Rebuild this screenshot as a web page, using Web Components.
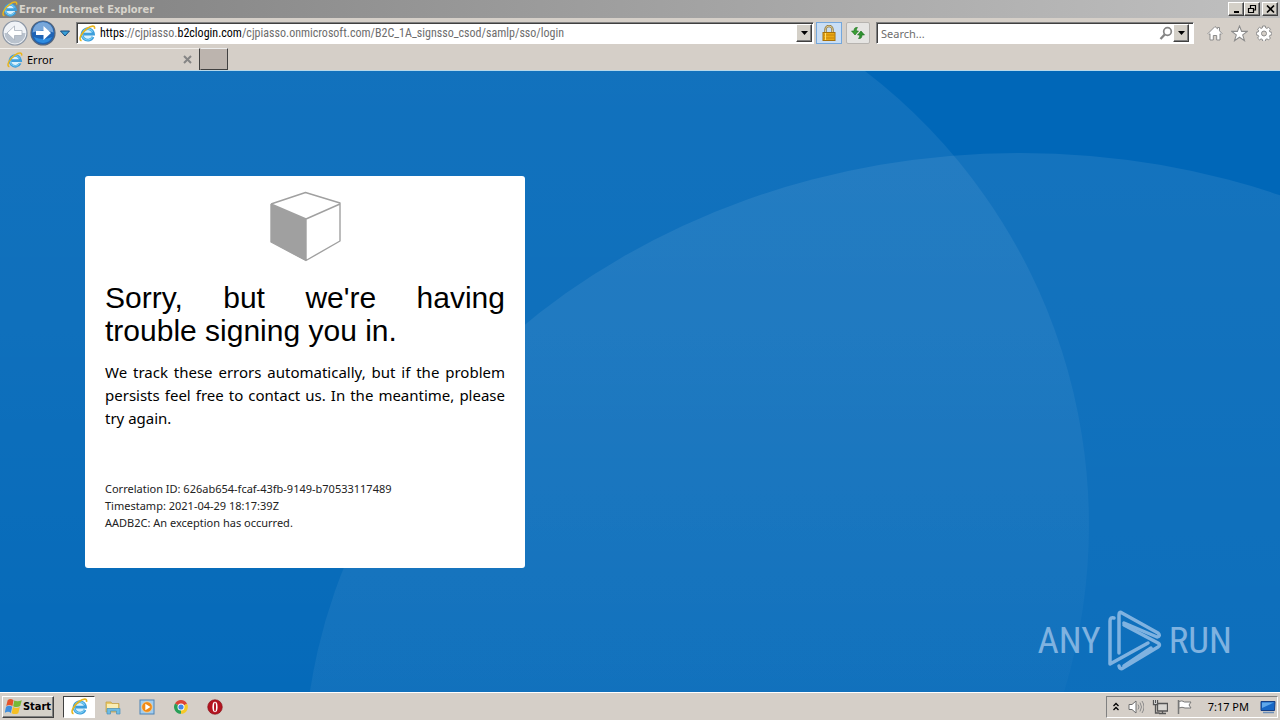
<!DOCTYPE html>
<html lang="en">
<head>
<meta charset="utf-8">
<title>Error</title>
<style>
    body {
        margin: 0;
        font-family: "Noto Sans", "Liberation Sans", sans-serif;
        font-size: 11px;
        color: #000;
    }
</style>
</head>
<body>
<desktop-screen>
    <title-bar slot="chrome">Error - Internet Explorer</title-bar>
    <nav-bar slot="chrome"></nav-bar>
    <tab-strip slot="chrome">Error</tab-strip>
    <error-page>
        <error-card>
            <span slot="title">Sorry, but we're having trouble signing you in.</span>
            <span slot="message">We track these errors automatically, but if the problem persists feel free to contact us. In the meantime, please try again.</span>
            <div slot="details">Correlation ID: 626ab654-fcaf-43fb-9149-b70533117489</div>
            <div slot="details">Timestamp: 2021-04-29 18:17:39Z</div>
            <div slot="details">AADB2C: An exception has occurred.</div>
        </error-card>
        <any-run-mark slot="mark"></any-run-mark>
    </error-page>
    <task-bar slot="taskbar"></task-bar>
</desktop-screen>

<script>
const ICONS = {
    ie: `<ellipse cx="8" cy="8.5" rx="5.2" ry="5.4" fill="#d9f1fc"/>
        <path d="M13.2 11.2A5.4 5.4 0 1 1 13.7 8.6H4.4" fill="none" stroke="#3d9edb" stroke-width="2.6"/>
        <path d="M12.6 11.4A5 5 0 0 1 3.2 9.2M4 6A5 5 0 0 1 12.8 6.6" fill="none" stroke="#7bd0f5" stroke-width="1"/>
        <path d="M2.4 14.8C-1.2 13.8 2.6 6.8 7.6 3.3C11.8.3 15.4.2 14.6 3.6" fill="none" stroke="#e9b51c" stroke-width="1.5"/>`,
    back: `<circle cx="13" cy="13" r="12" fill="#f0f3f7" stroke="#8b96a5" stroke-width="1.2"/>
        <path d="M2.5 13a10.5 10.5 0 0 0 21 0z" fill="#b9c2cd"/>
        <path d="M5 13l7.5-7v4.5H20v5h-7.5V20z" fill="#fff" stroke="#a7b0bb" stroke-width=".8"/>`,
    forward: `<circle cx="13" cy="13" r="12" fill="#1f63b4" stroke="#57677c" stroke-width="1.2"/>
        <path d="M2.5 12.5a10.5 10.5 0 0 1 21 0q-10-4-21 0z" fill="#78a7da"/>
        <path d="M4 17a9.8 9.8 0 0 0 18 0q-9 4-18 0z" fill="#2e8ce0"/>
        <path d="M21 13l-7.5-7v5H6v4h7.5v5z" fill="#fff"/>`,
    chevron: `<path d="M1 2h9L5.5 7z" fill="#36a0d8" stroke="#17477c"/>`,
    down: `<path d="M1 2h7L4.5 6z" fill="#000"/>`,
    lock: `<path d="M4.5 8V4.5a3.5 3.5 0 0 1 7 0V8" fill="none" stroke="#8a7442" stroke-width="2.4"/>
        <path d="M4.5 8V4.5a3.5 3.5 0 0 1 7 0V8" fill="none" stroke="#e0cd8d" stroke-width="1"/>
        <rect x="2" y="7.5" width="12" height="8" fill="#eaa914" stroke="#a6700b"/>
        <path d="M3 10h10M3 13h10" stroke="#c98408"/><path d="M4.5 8v7" stroke="#ffdf70"/>`,
    refresh: `<path d="M7.5 2.5C5 2 4 3.5 4 6H1.5L5 10l3.5-4H6.3Q6 4 7.5 2.5z" fill="#3c9e36" stroke="#19701b" stroke-width=".6"/>
        <path d="M8.5 13.5c2.5.5 3.5-1 3.5-3.5h2.5L11 6 7.5 10h2.2Q10 12 8.5 13.5z" fill="#2f9130" stroke="#19701b" stroke-width=".6"/>`,
    search: `<circle cx="8.5" cy="5.5" r="3.8" fill="#fff" stroke="#858585" stroke-width="1.7"/><path d="M5.7 8.5L1.5 13" stroke="#858585" stroke-width="2.4"/>`,
    home: `<path d="M1 8.5L8 1.5l2.5 2.3V2.5h2v3.3L15 8.5l-1 1-1-.8V15H9.7v-4.5H6.3V15H3V8.7l-1 .8z" fill="#fff" stroke="#8b8b8b"/>`,
    star: `<path d="M8 1l2 5h5.3L11 9.3l1.7 5.4L8 11.5l-4.7 3.2L5 9.3.7 6H6z" fill="#fff" stroke="#8b8b8b"/>`,
    gear: `<path d="M6.7 1h2.6l.4 1.9 1.2.5 1.7-1.1 1.8 1.9-1 1.6.5 1.1 1.9.4v2.5l-1.9.5-.5 1.2 1 1.6-1.8 1.8-1.6-1-1.3.5-.4 1.9H6.7l-.4-1.9-1.2-.5-1.6 1-1.9-1.8 1.1-1.6-.5-1.2-1.9-.5V7.3l1.9-.4.5-1.1-1.1-1.6 1.9-1.9 1.6 1.1 1.2-.5z" fill="#fff" stroke="#8b8b8b"/><circle cx="8" cy="8.5" r="2.5" fill="#d5cfc8" stroke="#8b8b8b"/>`,
    close: `<path d="M1 1l7 7M8 1L1 8" stroke="#858585" stroke-width="2"/>`,
    winMin: `<path d="M2 8h5" stroke="#000" stroke-width="2"/>`,
    winRestore: `<path d="M3.5 4V1.5h5V6H7M3 1.5h6" fill="none" stroke="#000" stroke-width="1.2"/><path d="M1.5 4.5h5v4h-5zM1 4.5h6" fill="none" stroke="#000" stroke-width="1.2"/>`,
    winClose: `<path d="M1 1.5l7 7M8 1.5l-7 7" stroke="#000" stroke-width="1.7"/>`,
    flag: `<path d="M2.5 2Q5 0 8 2L7 7.5Q4 5.5 1.2 7.5z" fill="#e5532a"/><path d="M8.7 2.3Q12 4 15.8 2L14.3 7.5Q11 9.5 7.7 7.7z" fill="#77b936"/>
        <path d="M1 8.3Q4 6.5 6.8 8.3L5.5 14Q3 12-.3 14z" fill="#3f8ede"/><path d="M7.5 8.5Q10.5 10.5 14 8.5L12.5 14.3Q9.5 16 6.2 14.3z" fill="#f5bf24"/>`,
    folder: `<path d="M1 3h5l1 1.5h7V13H1z" fill="#e9c867" stroke="#c29d41" stroke-width=".7"/><path d="M2 5h11v4H2z" fill="#f9edb3"/>
        <path d="M2 15V9.5h13V15h-3.5v-3h-6v3z" fill="#6dbce4" stroke="#4a91bb" stroke-width=".7"/>`,
    media: `<rect x="1" y="1" width="14" height="14" fill="#a2cdef" stroke="#4c83b5"/><circle cx="8" cy="8" r="5.3" fill="#f08a16" stroke="#fbd59b" stroke-width=".7"/><path d="M6.3 4.8L11.5 8l-5.2 3.2z" fill="#fff"/>`,
    chrome: `<path d="M8 8L2 4.6A6.8 6.8 0 0 1 14 4.7z" fill="#dc4437"/><path d="M8 8l6-3.3A6.8 6.8 0 0 1 8 14.8z" fill="#f6c927"/>
        <path d="M8 8v6.8A6.8 6.8 0 0 1 2 4.6z" fill="#299f57"/><circle cx="8" cy="8" r="3.5" fill="#fff"/><circle cx="8" cy="8" r="2.6" fill="#4387e8"/>`,
    opera: `<circle cx="8" cy="8" r="7.3" fill="#b41420" stroke="#811017" stroke-width=".6"/><ellipse cx="8" cy="8" rx="2.6" ry="5.2" fill="#fff"/><ellipse cx="8" cy="8" rx="1" ry="4.5" fill="#b41420"/>`,
    more: `<path d="M1.5 4l2.5-2.5L6.5 4M1.5 8L4 5.5 6.5 8" fill="none" stroke="#000" stroke-width="1.3"/>`,
    sound: `<path d="M1 5.5h3L8 2v12l-4-3.5H1z" fill="#fff" stroke="#6e6e6e"/><path d="M10 5.5q2 2.5 0 5M12 3.5q3 4.5 0 9M14 2q4 6 0 12" fill="none" stroke="#8b8b8b"/>`,
    network: `<path d="M5.5 4.5h10v7.5h-10z" fill="#d9d7d3" stroke="#555" stroke-width="1.3"/><path d="M7 14.5h7M10.5 12v2.5M3.5 6v8h4" fill="none" stroke="#555" stroke-width="1.3"/><path d="M1.5 1v4.5h4V1M3.5 1v3" fill="#fff" stroke="#555" stroke-width="1.3"/>`,
    alert: `<path d="M2.5 1v14" stroke="#777" stroke-width="1.5"/><path d="M3 2.5q3-1.5 5.5.5H15l-2 3 2 3H9q-3-1.5-6 0z" fill="#fff" stroke="#777"/>`,
    desktop: `<path d="M1 2.5h14l-.5 9H1z" fill="#1767c5" stroke="#153e85"/><path d="M2 3.5h12L2 9z" fill="#5fa7ea"/><path d="M3 13.5h11" stroke="#6d8fb8" stroke-width="1.5"/>`
};

function icon(name, width = 16, height = width) {
    const boxes = {back: "26 26", forward: "26 26", chevron: "11 9", down: "9 8", close: "9 9", winMin: "9 10", winRestore: "10 10", winClose: "9 10", more: "8 10", search: "14 14"};
    return `<svg aria-hidden="true" width="${width}" height="${height}" viewBox="0 0 ${boxes[name] || "16 16"}">${ICONS[name]}</svg>`;
}

const RESET = `
    * { box-sizing: border-box; }
    svg { display: block; flex: none; }
    button, input {
        font: inherit;
        color: inherit;
        margin: 0;
        padding: 0;
        border: 0;
        border-radius: 0;
        background: none;
    }
    button {
        display: flex;
        align-items: center;
        justify-content: center;
        flex: none;
    }
    .raised {
        background: #d4d0c8;
        border: 1px solid;
        border-color: #fff #404040 #404040 #fff;
        box-shadow: inset -1px -1px #808080;
    }
`;

class BaseElement extends HTMLElement {
    connectedCallback() {
        if (this.shadowRoot) return;
        this.attachShadow({mode: "open"}).innerHTML = `<style>${RESET}</style>` + this.template();
    }
}

class DesktopScreen extends BaseElement {
    template() {
        return `
            <style>
                :host {
                    display: flex;
                    flex-direction: column;
                    min-height: 100vh;
                    background: #d5cfc8;
                }
                main {
                    display: flex;
                    flex: 1;
                    border-top: 1px solid #b5d8ea;
                }
            </style>
            <slot name="chrome"></slot>
            <main><slot></slot></main>
            <slot name="taskbar"></slot>
        `;
    }
}

class TitleBar extends BaseElement {
    template() {
        return `
            <style>
                :host {
                    display: flex;
                    align-items: center;
                    height: 18px;
                    padding: 0 2px;
                    background: linear-gradient(to right, #808080, #c0c0c0);
                    color: #d8d4cc;
                    font-family: "DejaVu Sans Condensed", "DejaVu Sans", sans-serif;
                    font-weight: bold;
                }
                .title { flex: 1; margin-left: 1px; }
                .raised { width: 16px; height: 14px; }
                .raised:last-child { margin-left: 2px; }
            </style>
            ${icon("ie")}
            <span class="title"><slot></slot></span>
            <button class="raised" aria-label="Minimize">${icon("winMin", 9, 10)}</button>
            <button class="raised" aria-label="Restore">${icon("winRestore", 10)}</button>
            <button class="raised" aria-label="Close">${icon("winClose", 9, 10)}</button>
        `;
    }
}

class NavBar extends BaseElement {
    template() {
        return `
            <style>
                :host {
                    display: flex;
                    align-items: center;
                    height: 30px;
                    padding: 0 8px 0 2px;
                }
                .history { display: flex; gap: 2px; align-items: center; margin-right: 4px; }
                .field {
                    display: flex;
                    align-items: center;
                    height: 22px;
                    background: #fff;
                    border: 1px solid;
                    border-color: #808080 #fff #fff #808080;
                    box-shadow: inset 1px 1px #404040;
                    padding: 2px 1px 2px 2px;
                    min-width: 0;
                }
                .address { flex: 1; }
                .search { width: 318px; margin-left: 6px; padding: 2px 4px 2px 3px; }
                .text { display: grid; flex: 1; align-items: center; min-width: 0; margin-left: 4px; }
                .search .text { margin-left: 1px; }
                .text > * { grid-area: 1 / 1; width: 100%; min-width: 0; }
                .url {
                    color: #6d6d6d;
                    font-family: "Roboto Condensed", Roboto, sans-serif;
                    font-size: 12px;
                    pointer-events: none;
                    white-space: nowrap;
                    overflow: hidden;
                }
                .url b { color: #000; font-weight: normal; }
                input { outline: 0; }
                input::placeholder { color: #6d6d6d; opacity: 1; }
                .raised { width: 16px; height: 18px; }
                .tool { width: 24px; height: 22px; margin-left: 4px; border: 1px solid #b7b4b0; border-radius: 2px; background: #e5e4e2; }
                .lock { background: #c9def5; border-color: #74a7dc; border-radius: 0; width: 26px; margin-left: 2px; }
                .links { display: flex; gap: 8px; margin-left: 13px; }
            </style>
            <div class="history">
                <button aria-label="Back">${icon("back", 26)}</button>
                <button aria-label="Forward">${icon("forward", 26)}</button>
                <button aria-label="Recent pages">${icon("chevron", 14, 9)}</button>
            </div>
            <div class="field address">
                ${icon("ie", 17)}
                <div class="text">
                    <input type="text" aria-label="Address">
                    <span class="url"><b>https</b>://cjpiasso.<b>b2clogin.com</b>/cjpiasso.onmicrosoft.com/B2C_1A_signsso_csod/samlp/sso/login</span>
                </div>
                <button class="raised" aria-label="Show address list">${icon("down", 9, 8)}</button>
            </div>
            <button class="tool lock" aria-label="Security report">${icon("lock", 16)}</button>
            <button class="tool" aria-label="Refresh">${icon("refresh", 16)}</button>
            <div class="field search">
                <div class="text"><input type="text" aria-label="Search" placeholder="Search..."></div>
                <button aria-label="Search">${icon("search", 14)}</button>
                <button class="raised" aria-label="Search options">${icon("down", 9, 8)}</button>
            </div>
            <div class="links">
                <button aria-label="Home">${icon("home", 16)}</button>
                <button aria-label="Favorites">${icon("star", 17)}</button>
                <button aria-label="Tools">${icon("gear", 16)}</button>
            </div>
        `;
    }
}

class TabStrip extends BaseElement {
    template() {
        return `
            <style>
                :host { display: flex; height: 22px; }
                .tab {
                    display: flex;
                    align-items: center;
                    gap: 4px;
                    width: 200px;
                    padding: 0 7px;
                    border-top: 1px solid #f1eeea;
                    border-right: 1px solid #404040;
                }
                .label { flex: 1; text-align: left; }
                .new {
                    width: 28px;
                    background: #bcb4ae;
                    border: 1px solid;
                    border-color: #eee #404040 #404040 #bcb4ae;
                }
            </style>
            <div class="tab">
                ${icon("ie")}
                <span class="label"><slot></slot></span>
                <button aria-label="Close tab">${icon("close", 9)}</button>
            </div>
            <button class="new" aria-label="New tab"></button>
        `;
    }
}

class ErrorPage extends BaseElement {
    template() {
        return `
            <style>
                :host {
                    display: grid;
                    flex: 1;
                    position: relative;
                    background: #0067b8;
                }
                .backdrop, .content { grid-area: 1 / 1; }
                .backdrop { width: 100%; height: 100%; min-height: 0; contain: size; }
                .content { position: relative; padding: 105px 85px; }
                ::slotted([slot="mark"]) { position: absolute; right: 48px; bottom: 20px; }
            </style>
            <svg class="backdrop" viewBox="0 0 1280 621" preserveAspectRatio="xMidYMid slice" aria-hidden="true">
                <defs>
                    <linearGradient id="fade" x1="0" y1="0" x2="0" y2="621" gradientUnits="userSpaceOnUse">
                        <stop offset="0" stop-color="#fff" stop-opacity=".07"/>
                        <stop offset=".4" stop-color="#fff" stop-opacity=".06"/>
                        <stop offset="1" stop-color="#fff" stop-opacity=".02"/>
                    </linearGradient>
                    <linearGradient id="rise" x1="0" y1="82" x2="0" y2="621" gradientUnits="userSpaceOnUse">
                        <stop offset="0" stop-color="#fff" stop-opacity=".08"/>
                        <stop offset="1" stop-color="#fff" stop-opacity=".05"/>
                    </linearGradient>
                </defs>
                <path d="M0 0H865A572 572 0 0 1 1064 621H0z" fill="url(#fade)"/>
                <ellipse cx="1020" cy="700" rx="716" ry="618" fill="url(#rise)"/>
            </svg>
            <div class="content"><slot></slot></div>
            <slot name="mark"></slot>
        `;
    }
}

class ErrorCard extends BaseElement {
    template() {
        return `
            <style>
                :host {
                    display: block;
                    max-width: 440px;
                    box-sizing: border-box;
                    padding: 14px 20px 37px;
                    background: #fff;
                    border-radius: 3px;
                    text-align: justify;
                }
                svg { margin: 0 auto 19px; }
                h1 {
                    margin: 0 0 14px;
                    font: 30px/33px "Liberation Sans", Arial, sans-serif;
                }
                p { margin: 0 0 50px; font: 15px/23px "Noto Sans", sans-serif; }
                .details { font: 11px/17px "Noto Sans", sans-serif; color: #222; }
            </style>
            <svg width="72" height="72" viewBox="0 0 72 72" aria-hidden="true">
                <path d="M2 14L37 29V71L2 52z" fill="#a0a0a0"/>
                <path d="M2 14L36.5 2.5L71 13V51L37 70.5V29L71 14M2 14L37 29M2 14V52L37 70.5" fill="none" stroke="#a0a0a0" stroke-width="1.4" stroke-linejoin="round"/>
            </svg>
            <h1><slot name="title"></slot></h1>
            <p><slot name="message"></slot></p>
            <div class="details"><slot name="details"></slot></div>
        `;
    }
}

class AnyRunMark extends BaseElement {
    template() {
        return `
            <style>
                :host {
                    display: flex;
                    align-items: center;
                    gap: 6px;
                    color: #7fb2e0;
                    font: 37px/62px "Roboto Condensed", Roboto, "Liberation Sans", sans-serif;
                }
            </style>
            <span>ANY</span>
            <svg width="56" height="62" viewBox="0 0 56 62" fill="none" stroke="currentColor" stroke-width="3.5" stroke-linejoin="round" stroke-linecap="round" aria-hidden="true">
                <path d="M7 8Q3 7 3 11V54L41 33"/>
                <path d="M12 43V5Q12 1 15 3L51 23Q54 26 50 27L17 13"/>
                <path d="M17 15L51 33Q54 35 51 37L16 58Q13 60 12 56M17 56L44 38"/>
            </svg>
            <span>RUN</span>
        `;
    }
}

class TaskBar extends BaseElement {
    template() {
        return `
            <style>
                :host {
                    display: flex;
                    align-items: center;
                    height: 28px;
                    padding: 0 2px;
                    box-sizing: border-box;
                    border-top: 1px solid #fff;
                    background: #d5cfc8;
                }
                .start {
                    gap: 1px;
                    width: 52px;
                    height: 22px;
                    font: bold 11px "DejaVu Sans Condensed", "DejaVu Sans", sans-serif;
                }
                .apps { display: flex; flex: 1; gap: 2px; margin-left: 9px; }
                .apps button { width: 32px; height: 22px; }
                .apps .active { background: #fff; border: 1px solid; border-color: #404040 #fff #fff #404040; }
                .tray {
                    display: flex;
                    align-items: center;
                    gap: 8px;
                    height: 22px;
                    padding: 0 1px 0 5px;
                    border: 1px solid;
                    border-color: #808080 #fff #fff #808080;
                }
                time { margin: 0 3px 0 8px; }
            </style>
            <button class="start raised">${icon("flag", 17)}Start</button>
            <div class="apps">
                <button class="active" aria-label="Internet Explorer">${icon("ie", 17)}</button>
                <button aria-label="Explorer">${icon("folder")}</button>
                <button aria-label="Media Player">${icon("media")}</button>
                <button aria-label="Chrome">${icon("chrome")}</button>
                <button aria-label="Opera">${icon("opera")}</button>
            </div>
            <div class="tray">
                <button aria-label="Show hidden icons">${icon("more", 8, 10)}</button>
                <button aria-label="Volume">${icon("sound")}</button>
                <button aria-label="Network">${icon("network")}</button>
                <button aria-label="Action Center">${icon("alert")}</button>
                <time datetime="19:17">7:17 PM</time>
                <button aria-label="Show desktop">${icon("desktop")}</button>
            </div>
        `;
    }
}

customElements.define("desktop-screen", DesktopScreen);
customElements.define("title-bar", TitleBar);
customElements.define("nav-bar", NavBar);
customElements.define("tab-strip", TabStrip);
customElements.define("error-page", ErrorPage);
customElements.define("error-card", ErrorCard);
customElements.define("any-run-mark", AnyRunMark);
customElements.define("task-bar", TaskBar);
</script>
</body>
</html>
